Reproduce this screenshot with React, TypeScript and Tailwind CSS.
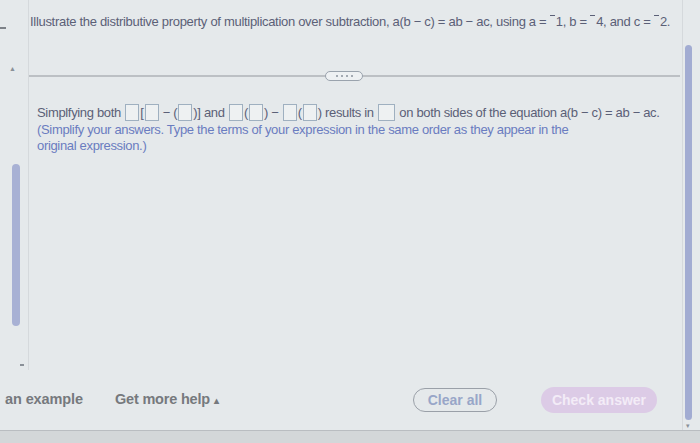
import React from "react";

const Box = ({ w = 14 }: { w?: number }) => (
  <span
    className="inline-block align-middle border border-[#9fb0c0] bg-[#eef1f2] h-[17px] mx-[1px] -mt-[3px]"
    style={{ width: w }}
  />
);

const Neg = () => (
  <span className="inline-block align-top w-[5px] h-[1.3px] bg-current mt-[3px] mr-[1px]" />
);

export default function App() {
  return (
    <div className="w-[700px] h-[443px] bg-[#e5e9eb] flex flex-col overflow-hidden font-['Liberation_Sans',Arial,sans-serif]">
      <div className="flex-1 flex flex-row min-h-0">
        <div className="flex-1 min-w-0 flex flex-col">
          {/* question */}
          <div className="h-[42px] flex flex-row">
            <div className="w-[29px] border-r border-[#d5d9dc] relative shrink-0">
              <div className="absolute left-0 top-[27px] w-[6px] h-[1.5px] bg-[#7d8288]" />
            </div>
            <div className="min-w-0 pl-[1px] pt-[12px] text-[13px] tracking-[-0.3px] text-[#5b6077] whitespace-nowrap">
              Illustrate the distributive property of multiplication over subtraction, a(b − c) = ab − ac, using a = <Neg />1, b = <Neg />4, and c = <Neg />2.
            </div>
          </div>
          {/* middle */}
          <div className="flex-1 flex flex-row">
            <div className="w-[29px] shrink-0 border-r border-[#d5d9dc] relative">
              <div className="absolute left-[9px] top-[23px] text-[7px] text-[#8a9098] leading-none">▲</div>
              <div className="absolute left-[12px] top-[122px] w-[8px] h-[162px] rounded-full bg-[#a8b1d4]" />
              <div className="absolute left-[20px] top-[322px] w-[4px] h-[1.5px] bg-[#8a9098]" />
            </div>
            <div className="flex-1 min-w-0 flex flex-col pr-[26px]">
              <div className="mt-[33px] relative h-[2px] bg-[#bcc0c4] -mr-[24px]">
                <div className="absolute left-[296px] -top-[4px] w-[38px] h-[10px] rounded-full border border-[#9aa3ad] bg-[#eef1f3] flex items-center justify-center gap-[3px]">
                  <span className="w-[2px] h-[2px] rounded-full bg-[#8a929c]" />
                  <span className="w-[2px] h-[2px] rounded-full bg-[#8a929c]" />
                  <span className="w-[2px] h-[2px] rounded-full bg-[#8a929c]" />
                  <span className="w-[2px] h-[2px] rounded-full bg-[#8a929c]" />
                </div>
              </div>
              <div className="pl-[8px] pt-[28px] text-[13px] tracking-[-0.33px] leading-[16px]">
                <div className="text-[#5b6077] whitespace-nowrap">
                  Simplfying both <Box />[<Box /> − (<Box />)] and <Box />(<Box />) − <Box />(<Box />) results in <Box w={17} /> on both sides of the equation a(b − c) = ab − ac.
                </div>
                <div className="text-[#6a7cc0] mt-[1px] whitespace-nowrap">
                  (Simplify your answers. Type the terms of your expression in the same order as they appear in the
                  <br />
                  original expression.)
                </div>
              </div>
            </div>
          </div>
          {/* footer */}
          <div className="h-[60px] flex flex-row items-center">
            <span className="ml-[5px] text-[14.5px] font-bold text-[#76797d] tracking-[-0.1px]">an example</span>
            <span className="ml-[32px] text-[14.5px] font-bold text-[#76797d] tracking-[-0.2px]">
              Get more help <span className="text-[10px]">▴</span>
            </span>
            <div className="flex-1" />
            <div className="w-[84px] h-[24px] rounded-full border-[1.5px] border-[#9aa0a8] flex items-center justify-center text-[14px] font-bold text-[#98a6c8]">
              Clear all
            </div>
            <div className="ml-[44px] mr-[25px] w-[116px] h-[26px] rounded-full bg-[#dccbe6] flex items-center justify-center text-[14px] font-bold text-[#f3ecf7]">
              Check answer
            </div>
          </div>
        </div>
        {/* right scrollbar */}
        <div className="w-[18px] shrink-0 border-l border-[#d5d9dc] flex flex-col items-center relative">
          <div className="mt-[45px] w-[7px] h-[375px] rounded-full bg-[#a2acd2] mr-[6px]" />
          <div className="mt-[2px] text-[7px] text-[#8a9098] leading-none mr-[8px]">▾</div>
        </div>
      </div>
      <div className="h-[13px] bg-[#d3d7d9] border-t border-[#b9bdc1]" />
    </div>
  );
}
